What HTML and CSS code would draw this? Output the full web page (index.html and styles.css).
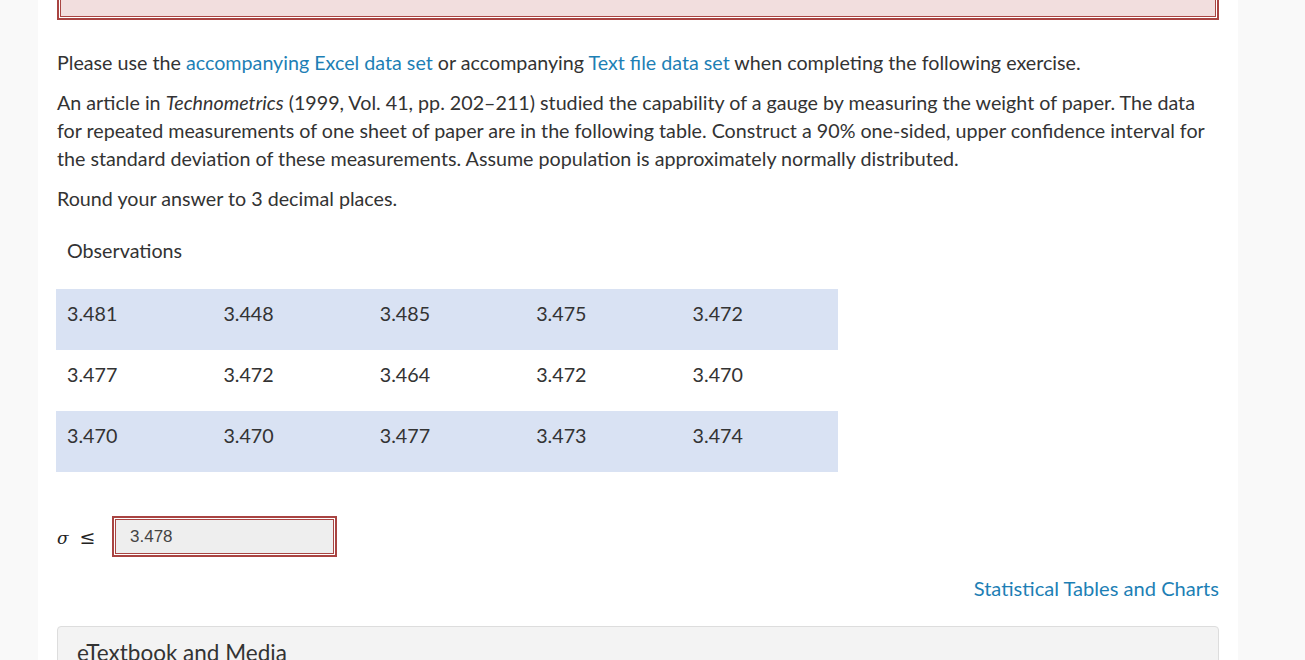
FILE: index.html
```html
<!DOCTYPE html>
<html>
<head>
<meta charset="utf-8">
<link rel="stylesheet" href="styles.css">
</head>
<body>
<div class="panel">
  <div class="error-box"></div>
  <p class="para first">Please use the <a class="link">accompanying Excel data set</a> or accompanying <a class="link">Text file data set</a> when completing the following exercise.</p>
  <p class="para">An article in <i>Technometrics</i> (1999, Vol. 41, pp. 202–211) studied the capability of a gauge by measuring the weight of paper. The data for repeated measurements of one sheet of paper are in the following table. Construct a 90% one-sided, upper confidence interval for the standard deviation of these measurements. Assume population is approximately normally distributed.</p>
  <p class="para">Round your answer to 3 decimal places.</p>
  <div class="obs-title">Observations</div>
  <table class="obs">
    <tr class="shade"><td>3.481</td><td>3.448</td><td>3.485</td><td>3.475</td><td>3.472</td></tr>
    <tr><td>3.477</td><td>3.472</td><td>3.464</td><td>3.472</td><td>3.470</td></tr>
    <tr class="shade"><td>3.470</td><td>3.470</td><td>3.477</td><td>3.473</td><td>3.474</td></tr>
  </table>
  <div class="answer-row">
    <span class="sym"><i>σ</i>&nbsp;&nbsp;<span class="le">≤</span></span>
    <div class="answer">3.478</div>
  </div>
  <div class="tables-link"><a class="link">Statistical Tables and Charts</a></div>
  <div class="media">eTextbook and Media</div>
</div>
</body>
</html>
```
FILE: styles.css
```css
html, body {
  margin: 0;
  padding: 0;
  background: #f9f9f9;
  overflow: hidden;
  height: 660px;
}
.panel {
  margin-left: 38px;
  width: 1200px;
  box-sizing: border-box;
  padding: 0 19px 0 19px;
  background: #fff;
  min-height: 720px;
  font-family: Lato, "Liberation Sans", sans-serif;
  color: #333;
  font-size: 19.7px;
}
.error-box {
  margin-top: -40px;
  height: 60px;
  box-sizing: border-box;
  border: 2px solid #a94442;
  box-shadow: inset 0 0 0 1px #fff, inset 0 0 0 2px #a94442;
  background: #f2dede;
}
.para {
  margin: 12px 0 0 0;
  line-height: 28px;
}
.para.first {
  margin-top: 29px;
}
.link {
  color: #1d7fb5;
  text-decoration: none;
}
.obs-title {
  margin-top: 24px;
  padding-left: 10px;
  line-height: 28px;
}
.obs {
  margin-top: 24px;
  margin-left: -1px;
  border-collapse: collapse;
  width: 782px;
}
.obs td {
  width: 156px;
  height: 61px;
  box-sizing: border-box;
  padding: 0 0 13px 11px;
  vertical-align: middle;
  color: #333;
}
.obs tr.shade td {
  background: #d9e2f3;
}
.answer-row {
  margin-top: 44px;
  display: flex;
  align-items: center;
}
.sym {
  font-family: "DejaVu Serif", "Liberation Serif", serif;
  font-size: 17px;
  width: 55px;
  color: #222;
}
.le {
  font-size: 19px;
}
.answer {
  width: 225px;
  height: 41px;
  box-sizing: border-box;
  border: 2px solid #a94442;
  box-shadow: inset 0 0 0 1px #fff, inset 0 0 0 2px #a94442;
  background: #eee;
  font-family: "Liberation Sans", Arial, sans-serif;
  font-size: 17px;
  color: #444;
  padding-left: 16px;
  line-height: 38px;
}
.tables-link {
  text-align: right;
  margin-top: 17px;
  line-height: 28px;
  font-size: 20.1px;
}
.media {
  margin-top: 24px;
  background: #f3f3f3;
  border: 1px solid #ddd;
  border-radius: 4px;
  padding: 12px 19px;
  font-size: 22.5px;
  color: #333;
  height: 60px;
}
```
